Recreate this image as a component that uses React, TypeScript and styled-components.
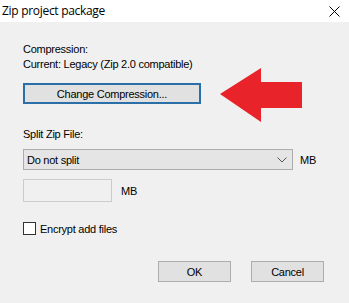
import React from "react";
import styled, { createGlobalStyle } from "styled-components";

const Global = createGlobalStyle`
  html, body { margin: 0; padding: 0; background: #f0f0f0; }
  #root { width: 349px; height: 303px; }
`;

const Window = styled.div`
  position: relative;
  width: 349px;
  height: 303px;
  background: #f0f0f0;
  font-family: "Liberation Sans", Arial, sans-serif;
  font-size: 11px;
  letter-spacing: -0.25px;
  color: #000;
  overflow: hidden;
  display: flex;
  flex-direction: column;
`;

const TitleBar = styled.div`
  height: 22px;
  background: #fff;
  display: flex;
  align-items: center;
  justify-content: space-between;
  padding: 0 9px 0 2px;
  box-sizing: border-box;
  font-family: "Open Sans", "Noto Sans", sans-serif;
  font-size: 12px;
  letter-spacing: -0.3px;
`;

const Title = styled.span`
  margin-top: -2px;
`;

const Body = styled.div`
  padding: 21px 0 0 23px;
  display: flex;
  flex-direction: column;
`;

const Label = styled.div<{ $mt?: number }>`
  line-height: 13px;
  margin-top: ${(p) => p.$mt ?? 0}px;
  white-space: nowrap;
`;

const Button = styled.button<{ $w: number; $default?: boolean }>`
  width: ${(p) => p.$w}px;
  height: 21px;
  box-sizing: border-box;
  background: #e1e1e1;
  border: ${(p) => (p.$default ? "2px solid #2a6fa8" : "1px solid #adadad")};
  font-family: "Liberation Sans", Arial, sans-serif;
  font-size: 11px;
  letter-spacing: -0.25px;
  color: #000;
  padding: 0;
  margin: 0;
`;

const Row = styled.div<{ $mt?: number; $gap?: number }>`
  display: flex;
  align-items: center;
  gap: ${(p) => p.$gap ?? 0}px;
  margin-top: ${(p) => p.$mt ?? 0}px;
`;

const Select = styled.div`
  width: 270px;
  height: 21px;
  box-sizing: border-box;
  background: #e5e5e5;
  border: 1px solid #acacac;
  display: flex;
  align-items: center;
  justify-content: space-between;
  padding: 0 5px 0 3px;
`;

const TextBox = styled.div`
  width: 89px;
  height: 23px;
  box-sizing: border-box;
  background: #f0f0f0;
  border: 1px solid #cccccc;
`;

const CheckBox = styled.div`
  width: 13px;
  height: 13px;
  box-sizing: border-box;
  border: 1px solid #333;
  background: #fff;
`;

const Footer = styled.div`
  display: flex;
  justify-content: flex-end;
  gap: 20px;
  padding-right: 25px;
  margin-top: 26px;
`;

const Arrow = styled.svg`
  position: absolute;
  left: 0;
  top: 0;
`;

export default function App() {
  return (
    <>
      <Global />
      <Window>
        <TitleBar>
          <Title>Zip project package</Title>
          <svg width="11" height="11" viewBox="0 0 11 11">
            <path d="M0.5 0.5 L10.5 10.5 M10.5 0.5 L0.5 10.5" stroke="#000" strokeWidth="1" />
          </svg>
        </TitleBar>
        <Body>
          <Label>Compression:</Label>
          <Label $mt={2}>Current: Legacy (Zip 2.0 compatible)</Label>
          <Row $mt={12}>
            <Button $w={178} $default>Change Compression...</Button>
          </Row>
          <Label $mt={24}>Split Zip File:</Label>
          <Row $mt={8} $gap={7}>
            <Select>
              <span>Do not split</span>
              <svg width="10" height="6" viewBox="0 0 10 6">
                <path d="M0.5 0.5 L5 5 L9.5 0.5" fill="none" stroke="#555" strokeWidth="1" />
              </svg>
            </Select>
            <span>MB</span>
          </Row>
          <Row $mt={9} $gap={9}>
            <TextBox />
            <span>MB</span>
          </Row>
          <Row $mt={20} $gap={4}>
            <CheckBox />
            <span>Encrypt add files</span>
          </Row>
        </Body>
        <Footer>
          <Button $w={73}>OK</Button>
          <Button $w={73}>Cancel</Button>
        </Footer>
        <Arrow width="349" height="303" viewBox="0 0 349 303">
          <polygon points="220,94 261,68 261,82 302,82 302,108 261,108 261,122" fill="#e8232a" />
        </Arrow>
      </Window>
    </>
  );
}
